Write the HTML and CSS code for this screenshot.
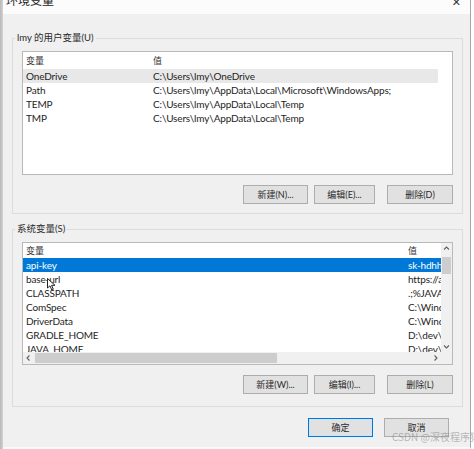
FILE: index.html
```html
<!DOCTYPE html>
<html lang="zh-CN">
<head>
<meta charset="utf-8">
<title>环境变量</title>
<link rel="stylesheet" href="styles.css">
</head>
<body>
<div class="screen">
  <div class="edge-left"></div>
  <div class="window">
    <div class="titlebar">
      <span class="title">环境变量</span>
      <span class="close">✕</span>
    </div>
    <div class="content">
      <fieldset class="group group-user">
        <legend>lmy 的用户变量(U)</legend>
        <div class="list list-user">
          <div class="row head"><span class="c1">变量</span><span class="c2">值</span></div>
          <div class="row hover"><span class="c1">OneDrive</span><span class="c2">C:\Users\lmy\OneDrive</span></div>
          <div class="row"><span class="c1">Path</span><span class="c2">C:\Users\lmy\AppData\Local\Microsoft\WindowsApps;</span></div>
          <div class="row"><span class="c1">TEMP</span><span class="c2">C:\Users\lmy\AppData\Local\Temp</span></div>
          <div class="row"><span class="c1">TMP</span><span class="c2">C:\Users\lmy\AppData\Local\Temp</span></div>
        </div>
        <div class="btns">
          <button class="btn b1">新建(N)...</button>
          <button class="btn b2">编辑(E)...</button>
          <button class="btn b3">删除(D)</button>
        </div>
      </fieldset>

      <fieldset class="group group-sys">
        <legend>系统变量(S)</legend>
        <div class="list list-sys">
          <div class="viewport">
            <div class="row head"><span class="c1">变量</span><span class="c2">值</span></div>
            <div class="row selected"><span class="c1">api-key</span><span class="c2">sk-hdhhs</span></div>
            <div class="row"><span class="c1">base-url</span><span class="c2">https://api</span></div>
            <div class="row"><span class="c1">CLASSPATH</span><span class="c2">.;%JAVA_HOME%</span></div>
            <div class="row"><span class="c1">ComSpec</span><span class="c2">C:\Windows</span></div>
            <div class="row"><span class="c1">DriverData</span><span class="c2">C:\Windows</span></div>
            <div class="row"><span class="c1">GRADLE_HOME</span><span class="c2">D:\dev\gradle</span></div>
            <div class="row"><span class="c1">JAVA_HOME</span><span class="c2">D:\dev\Program</span></div>
            <svg class="cursor" width="9" height="13" viewBox="0 0 9 13"><path d="M0.5 0.5 L0.5 10 L3 7.8 L4.8 12 L6.3 11.3 L4.6 7.3 L8 7.3 Z" fill="#fff" stroke="#222" stroke-width="1"/></svg>
          </div>
          <div class="vscroll">
            <svg class="arr" width="11" height="11" viewBox="0 0 11 11"><polyline points="3,6.5 5.5,4 8,6.5" fill="none" stroke="#606060" stroke-width="1.1"/></svg>
            <div class="vtrack"><div class="vthumb"></div></div>
            <svg class="arr" width="11" height="11" viewBox="0 0 11 11"><polyline points="3,4.5 5.5,7 8,4.5" fill="none" stroke="#606060" stroke-width="1.1"/></svg>
          </div>
          <div class="hscroll">
            <svg class="arr" width="11" height="12" viewBox="0 0 11 12"><polyline points="6.5,3.5 4,6 6.5,8.5" fill="none" stroke="#606060" stroke-width="1.1"/></svg>
            <div class="htrack"><div class="hthumb"></div></div>
            <svg class="arr" width="11" height="12" viewBox="0 0 11 12"><polyline points="4.5,3.5 7,6 4.5,8.5" fill="none" stroke="#606060" stroke-width="1.1"/></svg>
          </div>
          <div class="corner"></div>
        </div>
        <div class="btns">
          <button class="btn b1">新建(W)...</button>
          <button class="btn b2">编辑(I)...</button>
          <button class="btn b3">删除(L)</button>
        </div>
      </fieldset>

      <div class="footer">
        <button class="btn btn-default">确定</button>
        <button class="btn">取消</button>
      </div>
    </div>
  </div>
  <div class="edge-right"></div>
  <div class="watermark">CSDN @深夜程序猿</div>
</div>
</body>
</html>
```

FILE: styles.css
```css
* { box-sizing: border-box; }

html, body {
  margin: 0;
  padding: 0;
  background: #ffffff;
  overflow: hidden;
}

body {
  font-family: Lato, "Noto Sans CJK SC", sans-serif;
  font-size: 10px;
  color: #1e1e1e;
}

.screen {
  position: relative;
  display: flex;
  width: 474px;
  height: 449px;
}

.edge-left {
  width: 3px;
  background: linear-gradient(to right, #b8b8b8, #d4d4d4);
}

.edge-right {
  width: 3px;
  background: #ffffff;
}

.window {
  width: 468px;
  display: flex;
  flex-direction: column;
  background: #f0f0f0;
  border-right: 1px solid #a6a6a6;
  border-bottom: 2px solid #fafafa;
}

.titlebar {
  height: 14px;
  background: #fcfcfc;
  display: flex;
  justify-content: space-between;
  overflow: hidden;
  flex: none;
}

.title {
  font-family: "Noto Sans CJK SC", sans-serif;
  font-size: 12px;
  line-height: 12px;
  margin: -6px 0 0 3px;
  color: #222;
}

.close {
  font-family: "DejaVu Sans", sans-serif;
  font-size: 11px;
  line-height: 11px;
  margin: -3px 9px 0 0;
  color: #333;
}

.content {
  flex: 1;
  display: flex;
  flex-direction: column;
  padding: 0 7px 0 9px;
}

.group {
  margin: 0;
  border: 1px solid #dcdcdc;
  padding: 6px 9px 9px 9px;
  min-width: 0;
}

.group legend {
  padding: 0 2px;
  margin-left: -7px;
  line-height: 14px;
  font-size: 9.5px;
  color: #2a2a2a;
}

.group-user { margin-top: 17px; }
.group-sys { margin-top: 8px; padding-bottom: 12px; }

.list {
  background: #ffffff;
  border: 1px solid #b9b9b9;
}

.list-user { height: 124px; }

.row {
  display: flex;
  height: 14px;
  line-height: 14px;
  padding-left: 3px;
  white-space: nowrap;
  overflow: hidden;
  letter-spacing: -0.15px;
}

.row.head {
  height: 17px;
  line-height: 17px;
  font-family: "Noto Sans CJK SC", sans-serif;
  font-size: 9px;
  letter-spacing: 0;
  color: #333;
}

.list-user .row { width: 415px; }
.list-user .c1 { width: 127px; flex: none; }

.row.hover { background: #e8e8e8; }

.c2 { overflow: hidden; }

.list-sys {
  height: 123px;
  display: grid;
  grid-template-columns: 1fr 11px;
  grid-template-rows: 1fr 12px;
}

.viewport {
  position: relative;
  overflow: hidden;
}

.list-sys .row.head { height: 15px; line-height: 15px; }
.list-sys .c1 { width: 382px; flex: none; }

.row.selected {
  background: #0078d7;
  color: #ffffff;
}

.cursor {
  position: absolute;
  left: 24px;
  top: 35px;
}

.vscroll {
  background: #f0f0f0;
  display: flex;
  flex-direction: column;
}

.vtrack { flex: 1; padding: 3px 1px 0 1px; }
.vthumb { height: 17px; background: #cdcdcd; }

.hscroll {
  background: #f0f0f0;
  display: flex;
  align-items: stretch;
}

.htrack { flex: 1; padding: 1px 0 1px 1px; }
.hthumb { width: 242px; height: 100%; background: #cdcdcd; }

.corner { background: #f0f0f0; }

.arr { flex: none; display: block; }

.btns {
  display: flex;
  justify-content: flex-end;
  margin-top: 10px;
}

.btns .b1 { width: 65px; }
.btns .b2 { width: 61px; margin-left: 6px; }
.btns .b3 { width: 66px; margin-left: 12px; }

.btn {
  width: 65px;
  height: 19px;
  padding: 0;
  border: 1px solid #adadad;
  background: #e1e1e1;
  font-family: Lato, "Noto Sans CJK SC", sans-serif;
  font-size: 9px;
  color: #2a2a2a;
  line-height: 17px;
}

.footer {
  display: flex;
  justify-content: flex-end;
  gap: 11px;
  margin-top: 11px;
  padding-right: 14px;
}

.btn-default {
  border: 1px solid #0078d7;
  box-shadow: inset 0 0 0 1px #cfe4f7;
}

.watermark {
  position: absolute;
  left: 392px;
  top: 431px;
  font-family: "Noto Sans CJK SC", sans-serif;
  font-size: 10px;
  line-height: 12px;
  color: rgba(130, 130, 130, 0.55);
  white-space: nowrap;
}
```
